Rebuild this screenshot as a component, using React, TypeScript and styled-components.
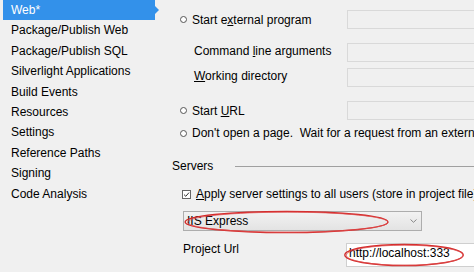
import React from 'react';
import styled, { createGlobalStyle, css } from 'styled-components';

const GlobalStyle = createGlobalStyle`
  html, body {
    margin:0;
    padding:0;
    background:#f0f0f0;
  }
  body {
    font-family:"Liberation Sans", Arial, sans-serif;
    font-size:12px;
    color:#000;
  }
`;

const PAGES = [
  'Web*',
  'Package/Publish Web',
  'Package/Publish SQL',
  'Silverlight Applications',
  'Build Events',
  'Resources',
  'Settings',
  'Reference Paths',
  'Signing',
  'Code Analysis',
];

function Ellipse(): JSX.Element {
  return (
    <svg width="100%" height="100%" viewBox="0 0 100 100" preserveAspectRatio="none">
      <ellipse cx="50" cy="50" rx="48.5" ry="44" fill="none" stroke="#d42b2b" strokeWidth="1.4" vectorEffect="non-scaling-stroke" />
      <ellipse cx="50.6" cy="51" rx="48" ry="42" fill="none" stroke="#e05050" strokeWidth="1" vectorEffect="non-scaling-stroke" opacity="0.7" />
    </svg>
  );
}

export default function App(): JSX.Element {
  return (
    <Window>
      <GlobalStyle />
      <Nav>
        {PAGES.map((p, i) => (
          <NavItem key={p} $active={i === 0}>{p}</NavItem>
        ))}
      </Nav>

      <Panel>
        <Row>
          <RadioLabel><Radio />Start e<u>x</u>ternal program</RadioLabel>
          <Field />
        </Row>
        <Row $mt={14}>
          <SubLabel>Command <u>l</u>ine arguments</SubLabel>
          <Field />
        </Row>
        <Row $mt={6}>
          <SubLabel><u>W</u>orking directory</SubLabel>
          <Field />
        </Row>
        <Row $mt={14}>
          <RadioLabel><Radio />Start <u>U</u>RL</RadioLabel>
          <Field />
        </Row>
        <WideLine>
          <RadioLabel><Radio />Don't open a page.  Wait for a request from an external application.</RadioLabel>
        </WideLine>

        <GroupHeader>
          Servers
          <Rule />
        </GroupHeader>

        <CheckRow>
          <CheckBox width="9" height="9" viewBox="0 0 9 9">
            <rect x="0.5" y="0.5" width="8" height="8" fill="#fff" stroke="#666" />
            <path d="M2 4.6 L3.8 6.3 L7 2.6" fill="none" stroke="#333" strokeWidth="1" />
          </CheckBox>
          <u>A</u>pply server settings to all users (store in project file)
        </CheckRow>

        <Combo>
          IIS Express
          <Chevron width="7" height="4" viewBox="0 0 7 4">
            <path d="M0.5 0.5 L3.5 3.3 L6.5 0.5" fill="none" stroke="#888" strokeWidth="1" />
          </Chevron>
          <ComboMark><Ellipse /></ComboMark>
        </Combo>

        <UrlRow>
          <UrlLabel>Project Url</UrlLabel>
          <UrlBox>
            http://localhost:333
            <UrlMark><Ellipse /></UrlMark>
          </UrlBox>
        </UrlRow>
      </Panel>
    </Window>
  );
}

const Window = styled.div`
  display:grid;
  grid-template-columns:160px 1fr;
  width:474px;
  height:272px;
  overflow:hidden;
  background:#f0f0f0;
`;

const Nav = styled.ul`
  list-style:none;
  margin:0;
  padding:0 0 0 3px;
`;

const NavItem = styled.li<{ $active?: boolean }>`
  position:relative;
  box-sizing:border-box;
  width:152px;
  height:20.4px;
  line-height:20px;
  padding-left:8px;
  white-space:nowrap;
  color:${p => (p.$active ? '#fff' : '#000')};
  background:${p => (p.$active ? '#3391ea' : 'transparent')};

  ${p => p.$active && css`
    &::after {
      content:'';
      position:absolute;
      right:-4px;
      top:50%;
      margin-top:-4px;
      border-left:4px solid #3391ea;
      border-top:4px solid transparent;
      border-bottom:4px solid transparent;
    }
  `}
`;

const Panel = styled.div`
  display:flex;
  flex-direction:column;
  padding-top:10px;
  min-width:0;
`;

const Row = styled.div<{ $mt?: number }>`
  display:grid;
  grid-template-columns:187px 140px;
  align-items:center;
  height:19px;
  margin-top:${p => p.$mt ?? 0}px;
`;

const RadioLabel = styled.div`
  display:flex;
  align-items:center;
  padding-left:20px;
  white-space:pre;
`;

const Radio = styled.span`
  box-sizing:border-box;
  width:7px;
  height:7px;
  margin-right:5px;
  border:1px solid #555;
  border-radius:50%;
  background:#fff;
  flex:none;
`;

const SubLabel = styled.div`
  padding-left:34px;
  margin-bottom:3px;
  white-space:nowrap;
`;

const Field = styled.div`
  box-sizing:border-box;
  height:19px;
  border:1px solid #d9d9d9;
  background:#f0f0f0;
`;

const WideLine = styled.div`
  display:flex;
  align-items:center;
  height:20px;
  margin-top:3px;
  white-space:nowrap;
`;

const GroupHeader = styled.div`
  display:flex;
  align-items:center;
  height:20px;
  margin-top:13px;
  padding-left:12px;
`;

const Rule = styled.div`
  flex:1;
  margin-left:22px;
  border-top:1px solid #a0a0a0;
`;

const CheckRow = styled.div`
  display:flex;
  align-items:center;
  height:20px;
  margin-top:8px;
  padding-left:22px;
  white-space:nowrap;
`;

const CheckBox = styled.svg`
  margin-right:5px;
  flex:none;
`;

const Combo = styled.div`
  position:relative;
  box-sizing:border-box;
  display:flex;
  align-items:center;
  width:239px;
  height:20px;
  margin-top:7px;
  margin-left:23px;
  padding-left:3px;
  border:1px solid #adadad;
  background:linear-gradient(#f2f2f2, #e3e3e3);
`;

const Chevron = styled.svg`
  margin-left:auto;
  margin-right:4px;
`;

const ComboMark = styled.div`
  position:absolute;
  left:-2px;
  top:-2px;
  width:209px;
  height:24px;
  pointer-events:none;
`;

const UrlRow = styled.div`
  display:grid;
  grid-template-columns:186px 140px;
  height:24px;
  margin-top:12px;
`;

const UrlLabel = styled.div`
  padding-left:23px;
  line-height:12px;
`;

const UrlBox = styled.div`
  position:relative;
  box-sizing:border-box;
  padding-left:2px;
  padding-top:2px;
  line-height:15px;
  border:1px solid #cfcfcf;
  border-right:none;
  background:#fff;
  white-space:nowrap;
`;

const UrlMark = styled.div`
  position:absolute;
  left:-4px;
  top:-1px;
  width:122px;
  height:24px;
  pointer-events:none;
`;
